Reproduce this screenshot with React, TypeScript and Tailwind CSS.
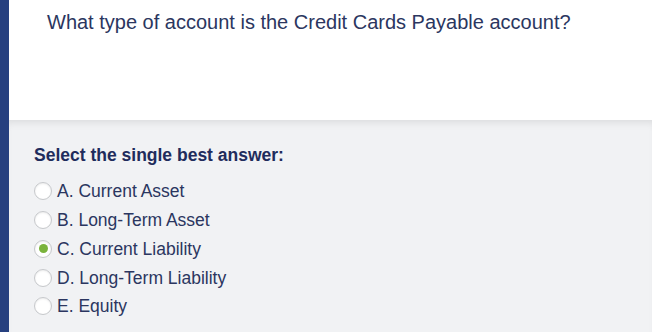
const options = [
  { label: 'A. Current Asset', checked: false },
  { label: 'B. Long-Term Asset', checked: false },
  { label: 'C. Current Liability', checked: true },
  { label: 'D. Long-Term Liability', checked: false },
  { label: 'E. Equity', checked: false },
]

function Radio({ checked }: { checked: boolean }) {
  return (
    <span className="w-[18px] h-[18px] rounded-full bg-white border border-[#c6c8cb] shadow-[inset_0_1px_2px_rgba(0,0,0,0.08)] flex items-center justify-center shrink-0">
      {checked && <span className="w-[9px] h-[9px] rounded-full bg-[#7ab33c]" />}
    </span>
  )
}

export default function App() {
  return (
    <div className="flex w-[652px] h-[332px] overflow-hidden font-['Liberation_Sans',Arial,sans-serif]">
      <div className="w-[9px] bg-[#26407f] shrink-0" />
      <div className="flex-1 flex flex-col">
        <div className="h-[120px] bg-white pl-[38px] pt-[10px]">
          <h1 className="text-[20px] leading-[24px] text-[#2b3660]">
            What type of account is the Credit Cards Payable account?
          </h1>
        </div>
        <div className="flex-1 bg-[#f1f2f4] shadow-[inset_0_7px_8px_-5px_rgba(0,0,0,0.10)] pl-[25px] pt-[25px]">
          <p className="text-[17.5px] leading-[20px] font-bold text-[#1f2c5c]">
            Select the single best answer:
          </p>
          <div className="mt-[12px] flex flex-col">
            {options.map((o) => (
              <label key={o.label} className="h-[28.75px] flex items-center gap-[5px]">
                <Radio checked={o.checked} />
                <span className="text-[17.5px] leading-[20px] text-[#2b3660]">{o.label}</span>
              </label>
            ))}
          </div>
        </div>
      </div>
    </div>
  )
}
